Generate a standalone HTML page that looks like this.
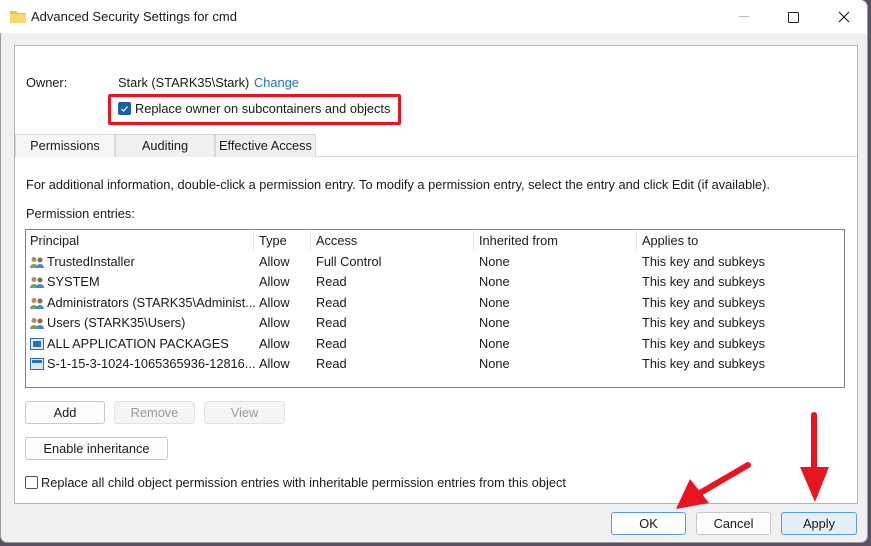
<!DOCTYPE html>
<html><head><style>
*{margin:0;padding:0;box-sizing:border-box}
body{width:871px;height:546px;background:#5a4f66;position:relative;overflow:hidden;font-family:"Liberation Sans",sans-serif;font-size:12.8px;color:#1a1a1a}
.a{position:absolute}
.win{left:0;top:0;width:868px;height:543px;background:#f0f0f0;border:1px solid #9a9a9a;border-radius:0 7px 7px 7px}
.title{left:0;top:0;width:867px;height:33px;background:#fff;border-radius:0 7px 0 0}
.panel{left:14px;top:45px;width:844px;height:459px;background:#fff;border:1px solid #b4b4b4}
.tab{top:134px;height:23px;background:#f0f0f0;border:1px solid #d8d8d8;border-bottom:none;text-align:center;line-height:22px}
.btn{height:23px;border:1px solid #c8c8c8;border-radius:3px;background:#fdfdfd;text-align:center;line-height:21px}
.dis{color:#9a9a9a;background:#f5f5f5;border-color:#e2e2e2}
.row{height:20.4px;line-height:20.4px;white-space:nowrap}
.ic{display:inline-block;width:14px;height:12px;vertical-align:-2px;margin-right:3px}
</style></head><body>
<div class="a win"></div>
<div class="a title"></div>
<svg class="a" style="left:10px;top:10px" width="16" height="13"><path d="M0 1h6l2 2h8v10H0z" fill="#f4c243"/><rect x="0" y="4" width="16" height="9" fill="#fbd86a"/></svg>
<div class="a" style="left:31px;top:9px;font-size:13px">Advanced Security Settings for cmd</div>
<div class="a" style="left:739px;top:16px;width:10px;height:1px;background:#bbb"></div>
<div class="a" style="left:788px;top:12px;width:11px;height:11px;border:1px solid #222;border-radius:1px"></div>
<svg class="a" style="left:838px;top:11px" width="12" height="12"><path d="M1 1L11 11M11 1L1 11" stroke="#222" stroke-width="1.2"/></svg>
<div class="a panel"></div>
<div class="a" style="left:26px;top:75px">Owner:</div>
<div class="a" style="left:118px;top:75px">Stark (STARK35\Stark)</div>
<div class="a" style="left:254px;top:75px;color:#1a6fc4">Change</div>
<div class="a" style="left:108px;top:94px;width:293px;height:31px;border:3px solid #e8141f;border-radius:2px"></div>
<div class="a" style="left:118px;top:102px;width:13px;height:13px;background:#1d5ea8;border-radius:2px"></div>
<svg class="a" style="left:119px;top:103px" width="11" height="11"><path d="M2.5 6l2 2 4-4.5" stroke="#fff" stroke-width="1.2" fill="none"/></svg>
<div class="a" style="left:135px;top:101px">Replace owner on subcontainers and objects</div>
<div class="a" style="left:15px;top:156px;width:842px;height:1px;background:#d8d8d8"></div>
<div class="a tab" style="left:15px;width:100px;background:#f7f7f7">Permissions</div>
<div class="a tab" style="left:115px;width:100px">Auditing</div>
<div class="a tab" style="left:215px;width:101px">Effective Access</div>
<div class="a" style="left:26px;top:177px">For additional information, double-click a permission entry. To modify a permission entry, select the entry and click Edit (if available).</div>
<div class="a" style="left:26px;top:206px">Permission entries:</div>
<div class="a" style="left:25px;top:229px;width:820px;height:159px;border:1px solid #828282;background:#fff"></div>
<div class="a" style="left:253px;top:231px;width:1px;height:19px;background:#e6e6e6"></div>
<div class="a" style="left:310px;top:231px;width:1px;height:19px;background:#e6e6e6"></div>
<div class="a" style="left:473px;top:231px;width:1px;height:19px;background:#e6e6e6"></div>
<div class="a" style="left:636px;top:231px;width:1px;height:19px;background:#e6e6e6"></div>
<div class="a" style="left:30px;top:233px">Principal</div>
<div class="a" style="left:259px;top:233px">Type</div>
<div class="a" style="left:316px;top:233px">Access</div>
<div class="a" style="left:479px;top:233px">Inherited from</div>
<div class="a" style="left:642px;top:233px">Applies to</div>
<div class="a" style="left:30px;top:252px">
<div class="row"><svg class="ic"><circle cx="4" cy="3.5" r="2.5" fill="#b58a5a"/><path d="M0 12a4 4 0 018 0z" fill="#6aa84f"/><circle cx="10" cy="4" r="2.5" fill="#8a6a4a"/><path d="M6 12a4 4 0 018 0z" fill="#4a86c8"/></svg>TrustedInstaller</div>
<div class="row"><svg class="ic"><circle cx="4" cy="3.5" r="2.5" fill="#b58a5a"/><path d="M0 12a4 4 0 018 0z" fill="#6aa84f"/><circle cx="10" cy="4" r="2.5" fill="#8a6a4a"/><path d="M6 12a4 4 0 018 0z" fill="#4a86c8"/></svg>SYSTEM</div>
<div class="row"><svg class="ic"><circle cx="4" cy="3.5" r="2.5" fill="#b58a5a"/><path d="M0 12a4 4 0 018 0z" fill="#6aa84f"/><circle cx="10" cy="4" r="2.5" fill="#8a6a4a"/><path d="M6 12a4 4 0 018 0z" fill="#4a86c8"/></svg>Administrators (STARK35\Administ...</div>
<div class="row"><svg class="ic"><circle cx="4" cy="3.5" r="2.5" fill="#b58a5a"/><path d="M0 12a4 4 0 018 0z" fill="#6aa84f"/><circle cx="10" cy="4" r="2.5" fill="#8a6a4a"/><path d="M6 12a4 4 0 018 0z" fill="#4a86c8"/></svg>Users (STARK35\Users)</div>
<div class="row"><svg class="ic"><rect x="0.5" y="0.5" width="13" height="11" fill="#d8e8f8" stroke="#2f6fb8"/><rect x="3" y="3" width="8" height="6" fill="#2f6fb8"/></svg>ALL APPLICATION PACKAGES</div>
<div class="row"><svg class="ic"><rect x="0.5" y="0.5" width="13" height="11" fill="#d8e8f8" stroke="#2f6fb8"/><rect x="2" y="2" width="10" height="3" fill="#2f6fb8"/></svg>S-1-15-3-1024-1065365936-12816...</div>
</div>
<div class="a" style="left:259px;top:252px"><div class="row">Allow</div><div class="row">Allow</div><div class="row">Allow</div><div class="row">Allow</div><div class="row">Allow</div><div class="row">Allow</div></div>
<div class="a" style="left:316px;top:252px"><div class="row">Full Control</div><div class="row">Read</div><div class="row">Read</div><div class="row">Read</div><div class="row">Read</div><div class="row">Read</div></div>
<div class="a" style="left:479px;top:252px"><div class="row">None</div><div class="row">None</div><div class="row">None</div><div class="row">None</div><div class="row">None</div><div class="row">None</div></div>
<div class="a" style="left:642px;top:252px"><div class="row">This key and subkeys</div><div class="row">This key and subkeys</div><div class="row">This key and subkeys</div><div class="row">This key and subkeys</div><div class="row">This key and subkeys</div><div class="row">This key and subkeys</div></div>
<div class="a btn" style="left:25px;top:401px;width:80px">Add</div>
<div class="a btn dis" style="left:114px;top:401px;width:81px">Remove</div>
<div class="a btn dis" style="left:204px;top:401px;width:81px">View</div>
<div class="a btn" style="left:25px;top:437px;width:143px">Enable inheritance</div>
<div class="a" style="left:25px;top:476px;width:13px;height:13px;border:1px solid #555;border-radius:2px;background:#fff"></div>
<div class="a" style="left:41px;top:475px">Replace all child object permission entries with inheritable permission entries from this object</div>
<div class="a btn" style="left:611px;top:512px;width:75px;border-color:#5a9ad8">OK</div>
<div class="a btn" style="left:696px;top:512px;width:75px">Cancel</div>
<div class="a btn" style="left:781px;top:512px;width:76px;border-color:#5a9ad8;background:#e3effb">Apply</div>
<svg class="a" style="left:0;top:0" width="871" height="546">
<path d="M748 465L700 493" stroke="#e8141f" stroke-width="6" stroke-linecap="round"/>
<path d="M676 509L690 479L709 503z" fill="#e8141f"/>
<path d="M814 415L814 475" stroke="#e8141f" stroke-width="6" stroke-linecap="round"/>
<path d="M800 467L829 467L815 502z" fill="#e8141f"/>
</svg>
</body></html>
